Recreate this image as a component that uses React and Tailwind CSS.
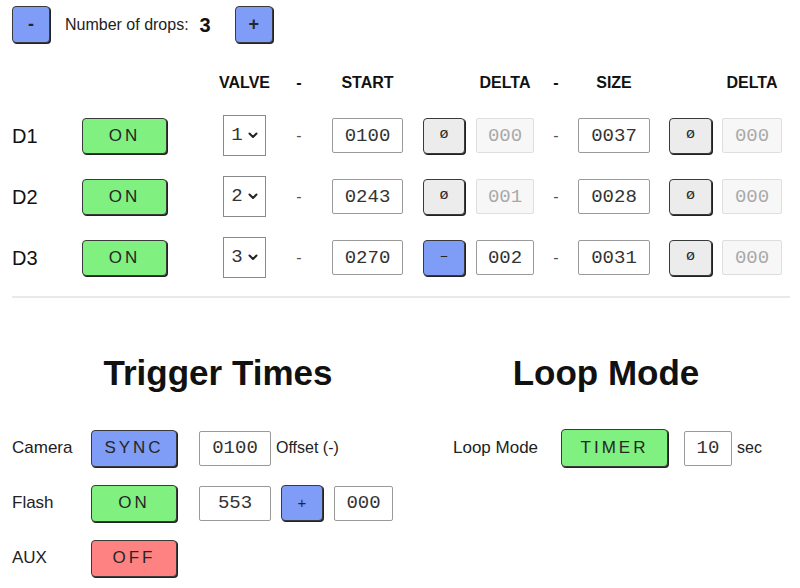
import { useState } from 'react'

const DROPS = [
  { id: 'D1', valve: 1, start: '0100', startDelta: '000', startOn: false, size: '0037', sizeDelta: '000' },
  { id: 'D2', valve: 2, start: '0243', startDelta: '001', startOn: false, size: '0028', sizeDelta: '000' },
  { id: 'D3', valve: 3, start: '0270', startDelta: '002', startOn: true, size: '0031', sizeDelta: '000' },
]

const SANS = { fontFamily: '"Liberation Sans", Arial, sans-serif' }
const MONO = { fontFamily: '"Liberation Mono", "Courier New", monospace' }

const TONE = {
  blue: 'bg-[#7f9df6]',
  green: 'bg-[#80f080]',
  red: 'bg-[#ff8282]',
  gray: 'bg-[#ececec]',
}

function Btn({ tone = 'blue', className = '', mono, children }) {
  return (
    <button
      className={`flex items-center justify-center rounded-[4px] border border-[#3a3a3a] shadow-[1px_1px_0_#222] text-[#262626] ${TONE[tone]} ${className}`}
      style={mono ? MONO : SANS}
    >
      {children}
    </button>
  )
}

function Field({ value, disabled, className = '' }) {
  return (
    <input
      readOnly
      value={value}
      disabled={disabled}
      className={`h-[35px] rounded-[2px] border text-center text-[19px] outline-none ${
        disabled ? 'border-[#dedede] bg-[#f7f7f7] text-[#a9a9a9]' : 'border-[#9a9a9a] bg-white text-[#333]'
      } ${className}`}
      style={MONO}
    />
  )
}

function Valve({ n }) {
  return (
    <div className="flex h-[41px] w-[43px] items-center justify-center gap-[5px] border border-[#8a8a8a] bg-white text-[19px] text-[#333]">
      <span style={MONO}>{n}</span>
      <svg width="10" height="7" viewBox="0 0 10 7">
        <path d="M1.5 1.5 5 5l3.5-3.5" fill="none" stroke="#222" strokeWidth="2" strokeLinecap="round" strokeLinejoin="round" />
      </svg>
    </div>
  )
}

function Dash({ className }) {
  return <span className={`text-center text-[16px] text-[#555] ${className}`}>-</span>
}

function Head({ className, children }) {
  return <span className={`flex justify-center whitespace-nowrap text-[16px] font-bold text-[#111] ${className}`}>{children}</span>
}

export default function App() {
  const [count] = useState(3)

  return (
    <div className="min-h-[588px] w-[800px] bg-white text-[#222]" style={SANS}>
      <div className="flex h-[49px] items-center pl-3">
        <Btn className="h-[37px] w-[38px] text-[18px] font-bold">-</Btn>
        <span className="ml-[15px] text-[16px] text-[#222]">Number of drops:</span>
        <span className="ml-[11px] text-[20px] font-bold text-[#111]">{count}</span>
        <Btn className="ml-[24px] h-[37px] w-[38px] text-[18px] font-bold">+</Btn>
      </div>

      <div className="mt-[24px] flex h-[20px] items-center pl-3">
        <span className="w-[70px]" />
        <span className="w-[85px]" />
        <Head className="ml-[56px] w-[43px]">VALVE</Head>
        <Head className="w-[66px]">-</Head>
        <Head className="w-[71px]">START</Head>
        <span className="ml-[20px] w-[42px]" />
        <Head className="ml-[11px] w-[58px]">DELTA</Head>
        <Head className="w-[44px]">-</Head>
        <Head className="w-[72px]">SIZE</Head>
        <span className="ml-[19px] w-[43px]" />
        <Head className="ml-[10px] w-[60px]">DELTA</Head>
      </div>

      <div className="mt-[12px]">
        {DROPS.map((d) => (
          <div key={d.id} className="flex h-[61px] items-center pl-3">
            <span className="w-[70px] text-[20px] text-[#111]">{d.id}</span>
            <Btn tone="green" className="h-[36px] w-[85px] text-[17px] tracking-[3px]">ON</Btn>
            <div className="ml-[56px]"><Valve n={d.valve} /></div>
            <Dash className="w-[66px]" />
            <Field value={d.start} className="w-[71px]" />
            <Btn tone={d.startOn ? 'blue' : 'gray'} mono className="ml-[20px] h-[36px] w-[42px] text-[15px]">
              {d.startOn ? '–' : 'ø'}
            </Btn>
            <Field value={d.startDelta} disabled={!d.startOn} className="ml-[11px] w-[58px]" />
            <Dash className="w-[44px]" />
            <Field value={d.size} className="w-[72px]" />
            <Btn tone="gray" mono className="ml-[19px] h-[36px] w-[43px] text-[15px]">ø</Btn>
            <Field value={d.sizeDelta} disabled className="ml-[10px] w-[60px]" />
          </div>
        ))}
      </div>

      <div className="ml-3 mt-[8px] h-[2px] w-[778px] bg-[#e9e9e9]" />

      <div className="flex">
        <section className="w-[424px] pl-3">
          <h2 className="mt-[55px] text-center text-[35px] font-bold leading-[40px] text-[#111]">Trigger Times</h2>
          <div className="mt-[36px] flex flex-col gap-[17px]">
            <div className="flex h-[38px] items-center">
              <span className="w-[79px] text-[17px]">Camera</span>
              <Btn className="h-[37px] w-[86px] text-[17px] tracking-[3px]">SYNC</Btn>
              <Field value="0100" className="ml-[22px] w-[72px]" />
              <span className="ml-[5px] text-[16px]">Offset (-)</span>
            </div>
            <div className="flex h-[38px] items-center">
              <span className="w-[79px] text-[17px]">Flash</span>
              <Btn tone="green" className="h-[37px] w-[86px] text-[17px] tracking-[3px]">ON</Btn>
              <Field value="553" className="ml-[22px] w-[72px]" />
              <Btn className="ml-[10px] h-[36px] w-[42px] text-[15px]">+</Btn>
              <Field value="000" className="ml-[11px] w-[59px]" />
            </div>
            <div className="flex h-[38px] items-center">
              <span className="w-[79px] text-[17px]">AUX</span>
              <Btn tone="red" className="h-[37px] w-[86px] text-[17px] tracking-[3px]">OFF</Btn>
            </div>
          </div>
        </section>

        <section className="w-[364px]">
          <h2 className="mt-[55px] text-center text-[35px] font-bold leading-[40px] text-[#111]">Loop Mode</h2>
          <div className="mt-[36px] flex h-[38px] items-center pl-[29px]">
            <span className="w-[108px] text-[17px]">Loop Mode</span>
            <Btn tone="green" className="h-[38px] w-[107px] text-[17px] tracking-[3px]">TIMER</Btn>
            <Field value="10" className="ml-[16px] w-[48px]" />
            <span className="ml-[5px] text-[16px]">sec</span>
          </div>
        </section>
      </div>
    </div>
  )
}
